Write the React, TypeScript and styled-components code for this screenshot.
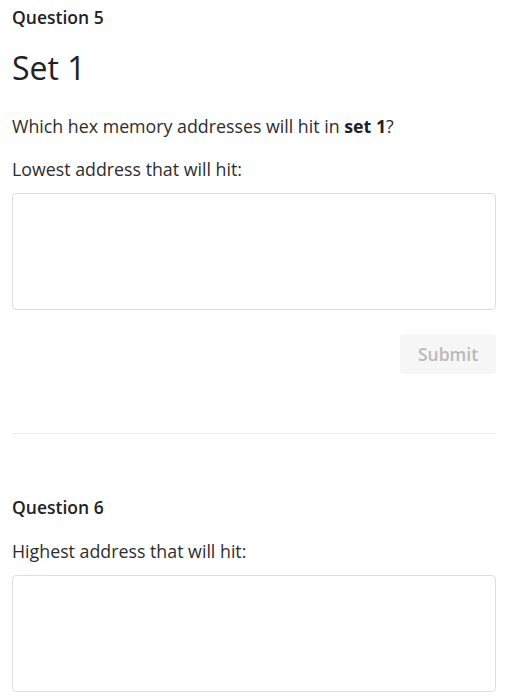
import styled, { createGlobalStyle } from 'styled-components';

const GlobalStyle = createGlobalStyle`
  html, body {
    margin: 0;
    padding: 0;
    background: #ffffff;
  }
  body {
    font-family: "Open Sans", "Liberation Sans", sans-serif;
    color: #2d2d2d;
  }
  * {
    box-sizing: border-box;
  }
`;

const Page = styled.main`
  padding: 0 12px;
`;

const QuestionBlock = styled.section`
  display: flex;
  flex-direction: column;
`;

const QuestionLabel = styled.h3<{ $top: number }>`
  margin: ${(p) => p.$top}px 0 0;
  font-size: 17.5px;
  line-height: 24px;
  font-weight: 600;
  color: #222;
`;

const Title = styled.h2`
  margin: 19px 0 0;
  font-size: 32px;
  line-height: 40px;
  font-weight: 400;
  color: #222;
`;

const Prompt = styled.p<{ $top: number }>`
  margin: ${(p) => p.$top}px 0 0;
  font-size: 17.8px;
  line-height: 24px;
  color: #2d2d2d;

  strong {
    font-weight: 700;
    color: #222;
  }
`;

const Answer = styled.textarea`
  display: block;
  width: 100%;
  height: 117px;
  margin-top: 12px;
  border: 1px solid #dedede;
  border-radius: 4px;
  resize: none;
  background: #fff;
  font: inherit;
  outline: none;
`;

const Actions = styled.div`
  display: flex;
  justify-content: flex-end;
  margin-top: 24px;
`;

const SubmitButton = styled.button`
  width: 96px;
  height: 40px;
  border: none;
  border-radius: 4px;
  background: #f6f6f6;
  color: #b9b9b9;
  font-family: inherit;
  font-size: 17.5px;
  font-weight: 600;
  cursor: not-allowed;
`;

const Divider = styled.hr`
  margin: 59px 0 0;
  border: none;
  border-top: 1px solid #ececec;
`;

export default function App() {
  return (
    <>
      <GlobalStyle />
      <Page>
        <QuestionBlock>
          <QuestionLabel $top={5}>Question 5</QuestionLabel>
          <Title>Set 1</Title>
          <Prompt $top={26}>
            Which hex memory addresses will hit in <strong>set 1</strong>?
          </Prompt>
          <Prompt $top={19}>Lowest address that will hit:</Prompt>
          <Answer />
          <Actions>
            <SubmitButton disabled>Submit</SubmitButton>
          </Actions>
        </QuestionBlock>
        <Divider />
        <QuestionBlock>
          <QuestionLabel $top={61}>Question 6</QuestionLabel>
          <Prompt $top={20}>Highest address that will hit:</Prompt>
          <Answer />
        </QuestionBlock>
      </Page>
    </>
  );
}
